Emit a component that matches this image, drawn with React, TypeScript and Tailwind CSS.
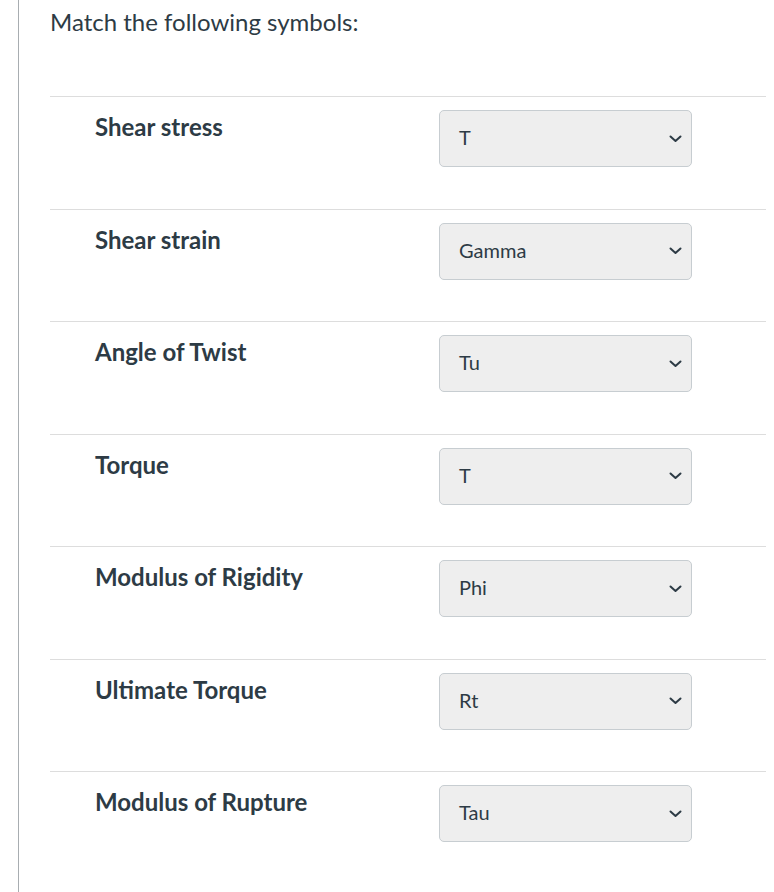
import React from "react";

const rows: [string, string][] = [
  ["Shear stress", "T"],
  ["Shear strain", "Gamma"],
  ["Angle of Twist", "Tu"],
  ["Torque", "T"],
  ["Modulus of Rigidity", "Phi"],
  ["Ultimate Torque", "Rt"],
  ["Modulus of Rupture", "Tau"],
];

function Chevron() {
  return (
    <svg width="13" height="8" viewBox="0 0 13 8" fill="none">
      <path d="M1.5 1.5 L6.5 6 L11.5 1.5" stroke="#2d3b45" strokeWidth="2" strokeLinecap="round" strokeLinejoin="round" />
    </svg>
  );
}

export default function App() {
  return (
    <div className="w-[774px] h-[892px] bg-white overflow-hidden" style={{ fontFamily: "Lato, 'Noto Sans', sans-serif" }}>
      <div className="ml-[18px] h-full border-l border-[#a8adb1] pl-[31px] pr-[8px] text-[#2d3b45]">
        <div className="pt-[7px] text-[24px] leading-[30px]">Match the following symbols:</div>
        <div className="mt-[59px]">
          {rows.map(([label, value], i) => (
            <div key={i} className="flex h-[112.5px] border-t border-[#dddddd] pl-[45px]">
              <div className="w-[344px] pt-[12px] text-[24px] font-bold leading-[36px]">{label}</div>
              <div className="pt-[13px]">
                <div className="flex h-[57px] w-[253px] items-center justify-between rounded-[5px] border border-[#c7cdd1] bg-[#eeeeee] pb-[3px] pl-[19px] pr-[9px] text-[20px]">
                  <span>{value}</span>
                  <span className="pt-[3px]"><Chevron /></span>
                </div>
              </div>
            </div>
          ))}
        </div>
      </div>
    </div>
  );
}
